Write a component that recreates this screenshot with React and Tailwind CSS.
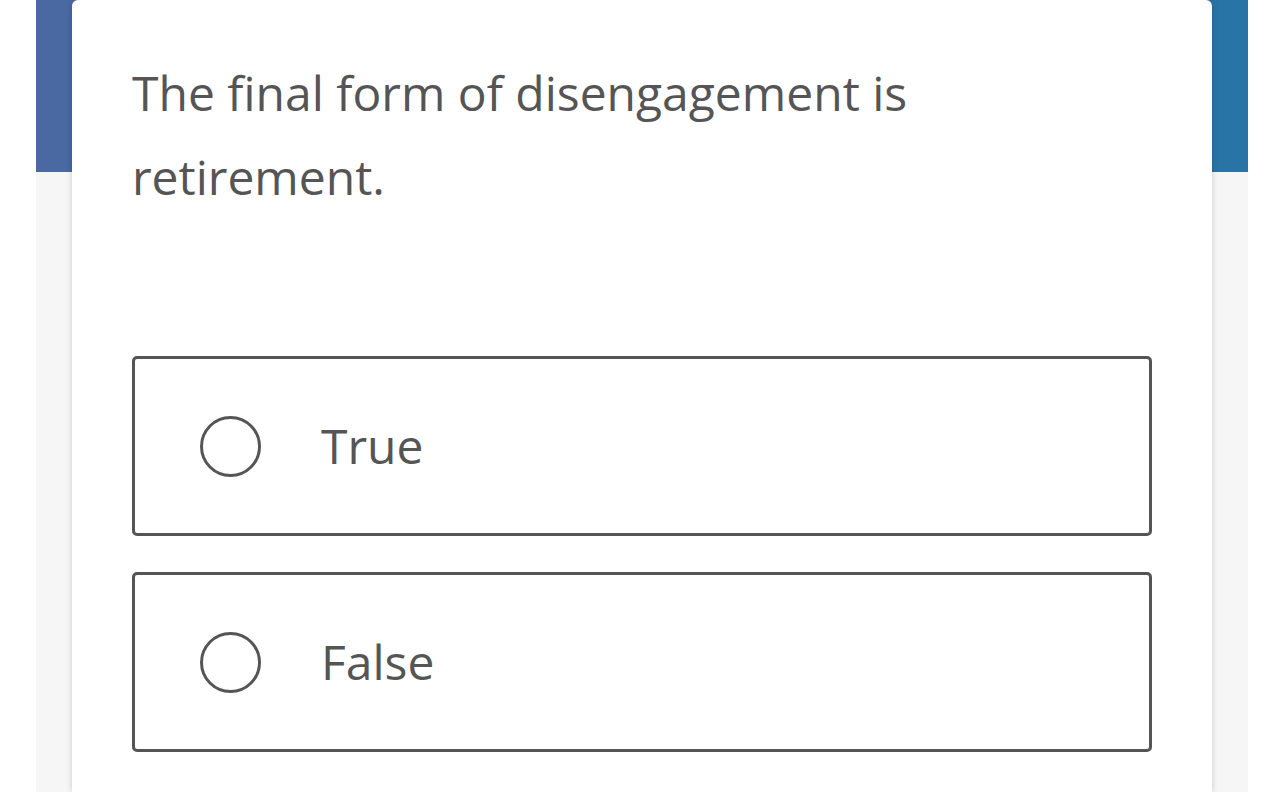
const Option = ({ label }) => (
  <div className="h-[180px] border-[3px] border-[#555] rounded-[5px] flex items-center pl-[65px]">
    <span className="w-[61px] h-[61px] rounded-full border-[3px] border-[#555] shrink-0" />
    <span className="ml-[60px] text-[48px] leading-none text-[#555]">{label}</span>
  </div>
);

export default function App() {
  return (
    <div className="h-[792px] bg-white px-[36px] overflow-hidden" style={{ fontFamily: '"Open Sans", sans-serif' }}>
      <div className="h-full bg-[#f6f6f6] bg-[linear-gradient(to_right,#4a69a3,#2874a6)] bg-no-repeat bg-[length:100%_172px] px-[36px]">
        <div className="h-full bg-white rounded-t-md shadow-[0_0_6px_rgba(0,0,0,0.18)] pl-[60px] pr-[60px] pt-[51px]">
          <p className="text-[48px] leading-[84px] text-[#555] pr-[200px]">
            The final form of disengagement is retirement.
          </p>
          <div className="mt-[137px] flex flex-col gap-[36px]">
            <Option label="True" />
            <Option label="False" />
          </div>
        </div>
      </div>
    </div>
  );
}
